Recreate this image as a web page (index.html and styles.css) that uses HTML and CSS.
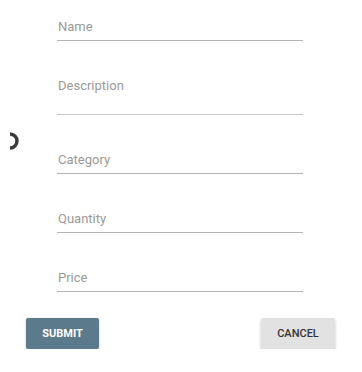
FILE: index.html
```html
<!DOCTYPE html>
<html lang="en">
<head>
    <meta charset="UTF-8">
    <meta name="viewport" content="width=device-width, initial-scale=1.0">
    <title>Add Product</title>
    <link rel="stylesheet" href="styles.css">
</head>
<body>
    <svg class="spinner" width="12" height="18" viewBox="0 0 12 18">
        <path d="M3 2 A7 7 0 0 1 3 16" fill="none" stroke="#3a3a3a" stroke-width="3.4"/>
    </svg>
    <form class="product-form">
        <div class="fields">
            <div class="field"><span class="field-label">Name</span></div>
            <div class="field field-tall"><span class="field-label">Description</span></div>
            <div class="field"><span class="field-label">Category</span></div>
            <div class="field"><span class="field-label">Quantity</span></div>
            <div class="field"><span class="field-label">Price</span></div>
        </div>
        <div class="actions">
            <button type="submit" class="btn btn-submit">Submit</button>
            <button type="button" class="btn btn-cancel">Cancel</button>
        </div>
    </form>
</body>
</html>
```

FILE: styles.css
```css
body {
    margin: 0;
    background: #fff;
    font-family: Roboto, "Noto Sans", sans-serif;
    position: relative;
}

.spinner {
    position: absolute;
    left: 7px;
    top: 132px;
}

.product-form {
    padding-top: 19px;
}

.fields {
    display: flex;
    flex-direction: column;
    gap: 37px;
    margin: 0 59px 0 57px;
}

.field {
    border-bottom: 1px solid #b5b5b5;
    padding: 1px 0 6px 1px;
}

.field-tall {
    padding-bottom: 21px;
    border-bottom-color: #c4c4c4;
}

.field-label {
    display: block;
    font-size: 13px;
    line-height: 14px;
    color: #9a9a9a;
}

.actions {
    display: flex;
    justify-content: space-between;
    padding: 26px 27px 0 26px;
}

.btn {
    height: 31px;
    border: none;
    border-radius: 2px;
    font-family: Roboto, sans-serif;
    font-size: 11px;
    font-weight: 700;
    text-transform: uppercase;
    cursor: pointer;
}

.btn-submit {
    width: 73px;
    background: #5b7a8c;
    color: #fff;
    box-shadow: 0 1px 3px rgba(0, 0, 0, 0.2);
}

.btn-cancel {
    width: 74px;
    background: #e2e2e2;
    color: #333;
    font-weight: 500;
    box-shadow: 0 2px 3px rgba(0, 0, 0, 0.25);
}
```
